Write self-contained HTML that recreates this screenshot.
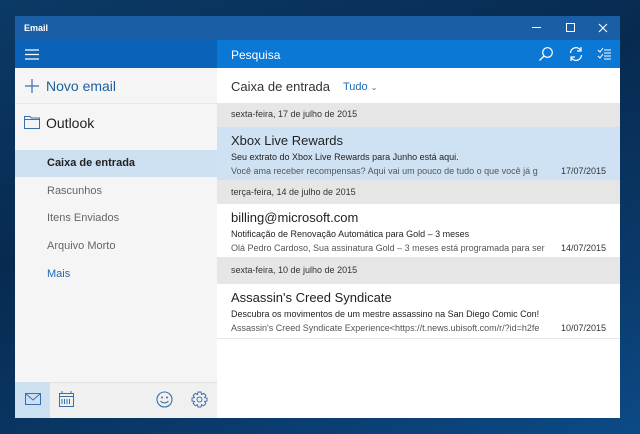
<!DOCTYPE html>
<html><head><meta charset="utf-8"><style>
*{margin:0;padding:0;box-sizing:border-box}
body{width:640px;height:434px;overflow:hidden;background:linear-gradient(160deg,#0b3a66 0%,#072a50 40%,#0a3766 70%,#0c4a86 100%);font-family:"Liberation Sans",sans-serif;position:relative}
.win{position:absolute;left:15px;top:16px;width:605px;height:402px;background:#fff}
.title{position:absolute;left:0;top:0;width:605px;height:24px;background:#1a5fa6;color:#fff;font-size:9px;font-weight:bold;padding:7px 0 0 9px}
.hdrL{position:absolute;left:0;top:24px;width:202px;height:28px;background:#0a63b8}
.hdrR{position:absolute;left:202px;top:24px;width:403px;height:28px;background:#0b78d6;color:#fff;font-size:12px;padding:8px 0 0 14px}
.left{position:absolute;left:0;top:52px;width:202px;height:350px;background:#f5f5f5}
.abs{position:absolute}
.nav{position:absolute;left:32px;font-size:11px;color:#666}
.date{position:absolute;left:202px;width:403px;background:#e6e6e6;font-size:9px;color:#333;padding:6px 0 0 14px}
.item{position:absolute;left:202px;width:403px;border-bottom:1px solid #e6e6e6}
.item .t{position:absolute;left:14px;top:6px;font-size:13px;color:#222}
.item .s{position:absolute;left:14px;top:25px;font-size:9px;color:#222}
.item .p{position:absolute;left:14px;top:39px;font-size:9px;color:#555;width:318px;white-space:nowrap;overflow:hidden}
.item .d{position:absolute;right:14px;top:39px;font-size:9px;color:#333}
</style></head><body>
<div class="win">
<div class="title">Email</div>
<div class="abs" style="left:517px;top:11px;width:9px;height:1px;background:#fff"></div>
<div class="abs" style="left:551px;top:7px;width:9px;height:9px;border:1px solid #fff"></div>
<svg class="abs" style="left:583px;top:7px" width="10" height="10"><path d="M1 1L9 9M9 1L1 9" stroke="#fff" stroke-width="1.1"/></svg>
<div class="hdrL"></div>
<svg class="abs" style="left:10px;top:33px" width="15" height="11"><path d="M0 1H14M0 5.5H14M0 10H14" stroke="#fff" stroke-width="1.2"/></svg>
<div class="hdrR">Pesquisa</div>
<svg class="abs" style="left:523px;top:30px" width="16" height="16"><circle cx="9.5" cy="6.5" r="4.8" fill="none" stroke="#fff" stroke-width="1.2"/><path d="M6 10L1.5 14.5" stroke="#fff" stroke-width="1.3"/></svg>
<svg class="abs" style="left:553px;top:30px" width="16" height="16"><path d="M2.5 7A5.5 5.5 0 0 1 12.5 4M13.5 9A5.5 5.5 0 0 1 3.5 12" fill="none" stroke="#fff" stroke-width="1.3"/><path d="M13 1V5H9M3 15V11H7" fill="none" stroke="#fff" stroke-width="1.2"/></svg>
<svg class="abs" style="left:582px;top:31px" width="15" height="13"><path d="M1 3L3 5L6 1M1 9L3 11L6 7" fill="none" stroke="#fff" stroke-width="1"/><path d="M7 3H14M7 6H14M7 9H14M7 12H14" stroke="#fff" stroke-width="1"/></svg>
<div class="left"></div>
<svg class="abs" style="left:10px;top:63px" width="14" height="14"><path d="M7 0V14M0 7H14" stroke="#3a6fa8" stroke-width="1.2"/></svg>
<div class="abs" style="left:31px;top:62px;font-size:14px;color:#1d5e9e">Novo email</div>
<div class="abs" style="left:0;top:87px;width:202px;height:1px;background:#e8e8e8"></div>
<svg class="abs" style="left:9px;top:99px" width="16" height="14"><path d="M0.5 1.5H6L7.5 3H15.5V13.5H0.5Z M0.5 4.5H15.5" fill="none" stroke="#3a6fa8" stroke-width="1"/></svg>
<div class="abs" style="left:31px;top:99px;font-size:14px;color:#222">Outlook</div>
<div class="abs" style="left:0;top:134px;width:202px;height:27px;background:#cde0f2"></div>
<div class="nav" style="top:141px;color:#222;font-weight:bold">Caixa de entrada</div>
<div class="nav" style="top:169px">Rascunhos</div>
<div class="nav" style="top:196px">Itens Enviados</div>
<div class="nav" style="top:224px">Arquivo Morto</div>
<div class="nav" style="top:252px;color:#1d6bb3">Mais</div>
<div class="abs" style="left:0;top:366px;width:202px;height:36px;background:#f0f0f0;border-top:1px solid #e2e2e2"></div>
<div class="abs" style="left:0;top:366px;width:35px;height:36px;background:#cde0f2"></div>
<svg class="abs" style="left:10px;top:377px" width="16" height="12"><rect x="0.5" y="0.5" width="15" height="11" fill="none" stroke="#3a6fa8"/><path d="M0.5 0.5L8 7L15.5 0.5" fill="none" stroke="#3a6fa8"/></svg>
<svg class="abs" style="left:44px;top:375px" width="15" height="16"><rect x="0.5" y="2.5" width="14" height="13" fill="none" stroke="#3a6fa8"/><path d="M0.5 5.5H14.5M3 0V3M12 0V3M3 8v5M5.5 8v5M8 8v5M10.5 8v5" stroke="#3a6fa8"/></svg>
<svg class="abs" style="left:141px;top:375px" width="17" height="17"><circle cx="8.5" cy="8.5" r="7.5" fill="none" stroke="#3a6fa8" stroke-width="1.1"/><circle cx="6" cy="6.5" r="1" fill="#3a6fa8"/><circle cx="11" cy="6.5" r="1" fill="#3a6fa8"/><path d="M4.5 10Q8.5 14 12.5 10" fill="none" stroke="#3a6fa8"/></svg>
<svg class="abs" style="left:176px;top:375px" width="17" height="17"><circle cx="8.5" cy="8.5" r="2.5" fill="none" stroke="#3a6fa8"/><path d="M7 1H10L10.5 3.5L12.8 2.4L14.9 4.5L13.6 6.6L16 7V10L13.6 10.5L14.8 12.6L12.6 14.8L10.5 13.6L10 16H7L6.5 13.6L4.4 14.8L2.2 12.6L3.4 10.5L1 10V7L3.4 6.6L2.2 4.5L4.4 2.4L6.5 3.5Z" fill="none" stroke="#3a6fa8"/></svg>
<div class="abs" style="left:216px;top:63px;font-size:13px;color:#333">Caixa de entrada</div>
<div class="abs" style="left:328px;top:65px;font-size:11px;color:#1d6bb3">Tudo <span style="font-size:8px">⌄</span></div>
<div class="date" style="top:87px;height:24px">sexta-feira, 17 de julho de 2015</div>
<div class="item" style="top:111px;height:54px;background:#cfe2f4">
<div class="t">Xbox Live Rewards</div><div class="s">Seu extrato do Xbox Live Rewards para Junho está aqui.</div>
<div class="p">Você ama receber recompensas? Aqui vai um pouco de tudo o que você já g</div><div class="d">17/07/2015</div></div>
<div class="date" style="top:165px;height:23px">terça-feira, 14 de julho de 2015</div>
<div class="item" style="top:188px;height:54px">
<div class="t">billing@microsoft.com</div><div class="s">Notificação de Renovação Automática para Gold – 3 meses</div>
<div class="p">Olá Pedro Cardoso, Sua assinatura Gold – 3 meses está programada para ser</div><div class="d">14/07/2015</div></div>
<div class="date" style="top:242px;height:26px;padding-top:7px">sexta-feira, 10 de julho de 2015</div>
<div class="item" style="top:268px;height:55px">
<div class="t">Assassin's Creed Syndicate</div><div class="s">Descubra os movimentos de um mestre assassino na San Diego Comic Con!</div>
<div class="p">Assassin's Creed Syndicate Experience&lt;https://t.news.ubisoft.com/r/?id=h2fe</div><div class="d">10/07/2015</div></div>
</div>
</body></html>
